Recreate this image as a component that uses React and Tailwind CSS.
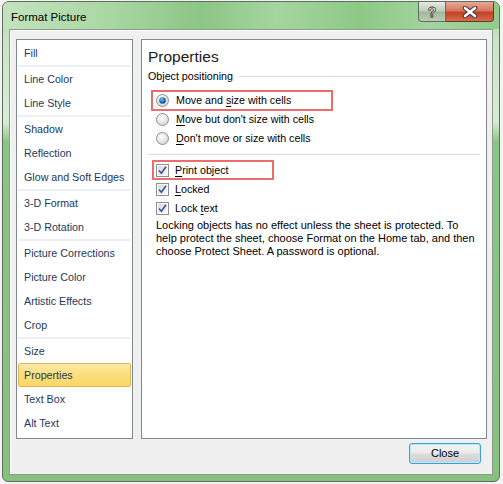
import React from "react";

const leftGroups = [
  ["Fill"],
  ["Line Color", "Line Style"],
  ["Shadow", "Reflection", "Glow and Soft Edges"],
  ["3-D Format", "3-D Rotation"],
  ["Picture Corrections", "Picture Color", "Artistic Effects", "Crop"],
  ["Size", "Properties", "Text Box", "Alt Text"],
];

function Radio({ checked }) {
  return (
    <svg width="13" height="13" viewBox="0 0 13 13" className="shrink-0">
      <defs>
        <radialGradient id="rg" cx="40%" cy="35%" r="70%">
          <stop offset="0" stopColor="#ffffff" />
          <stop offset="1" stopColor="#d4d4d4" />
        </radialGradient>
        <radialGradient id="dot" cx="40%" cy="35%" r="70%">
          <stop offset="0" stopColor="#7ac6f0" />
          <stop offset="0.6" stopColor="#1f6fb0" />
          <stop offset="1" stopColor="#0c3d6e" />
        </radialGradient>
      </defs>
      <circle cx="6.5" cy="6.5" r="6" fill="url(#rg)" stroke="#8e8f8f" />
      {checked && <circle cx="6.5" cy="6.5" r="3.3" fill="url(#dot)" />}
    </svg>
  );
}

function Check() {
  return (
    <svg width="13" height="13" viewBox="0 0 13 13" className="shrink-0">
      <defs>
        <linearGradient id="cg" x1="0" y1="0" x2="1" y2="1">
          <stop offset="0" stopColor="#d9dadc" />
          <stop offset="1" stopColor="#f6f6f6" />
        </linearGradient>
      </defs>
      <rect x="0.5" y="0.5" width="12" height="12" fill="#fff" stroke="#8e8f8f" />
      <rect x="2" y="2" width="9" height="9" fill="url(#cg)" />
      <path d="M3 6.5 L5.4 9.2 L10 2.8" fill="none" stroke="#3b5496" strokeWidth="1.6" />
    </svg>
  );
}

function U({ children }) {
  return <span className="underline underline-offset-[2px]">{children}</span>;
}

export default function App() {
  return (
    <div className="w-[503px] h-[484px] bg-[#f3f3f3] pl-[2px] pt-[1px] font-['Liberation_Sans',Arial,sans-serif] overflow-hidden">
      <div className="w-[498px] h-[481px] flex flex-col rounded-t-[7px] rounded-b-[6px] border border-[#5f6d5f] bg-[linear-gradient(to_bottom,#a9d7a3_0px,#c9e6c5_40px,#d8ecd5_120px,#8ac683_140px,#86c27e_100%)] overflow-hidden">
        {/* title bar */}
        <div className="h-[27px] flex items-start shrink-0 bg-[linear-gradient(to_right,#c3e3be_0%,#a9d6a3_22%,#8cc685_40%,#a6d5a0_55%,#8dc986_72%,#a4d49e_86%,#93cb8c_100%)]">
          <div className="pl-[8px] pt-[8px] text-[11.5px] leading-[14px] text-black">Format Picture</div>
          <div className="ml-auto mr-[5px] flex">
            <div className="w-[28px] h-[20px] rounded-bl-[4px] border border-t-0 border-[#5e6e5e] bg-[linear-gradient(to_bottom,#e3ece1_0%,#bccdb9_48%,#9fb89b_52%,#b8cdb4_100%)] flex items-center justify-center">
              <span className="text-[14px] font-bold leading-none text-white [-webkit-text-stroke:0.8px_#3c3c3c]">?</span>
            </div>
            <div className="w-[48px] h-[20px] rounded-br-[4px] border border-l-0 border-t-0 border-[#5e3a30] bg-[linear-gradient(to_bottom,#e6a996_0%,#d8775f_45%,#c24226_55%,#d66c4c_100%)] flex items-center justify-center">
              <svg width="16" height="12" viewBox="0 0 16 12">
                <path d="M3 2 L13 10 M13 2 L3 10" stroke="#3a3a3a" strokeWidth="4.6" strokeLinecap="round" />
                <path d="M3 2 L13 10 M13 2 L3 10" stroke="#ffffff" strokeWidth="2.6" strokeLinecap="round" />
              </svg>
            </div>
          </div>
        </div>

        {/* client area */}
        <div className="flex-1 mx-[6px] mb-[6px] border border-[#8b9d8a] bg-[#f0f0f0] shadow-[inset_1px_1px_0_#ffffff] flex flex-col pl-[6px] pr-[5px] pt-[9px]">
          <div className="flex gap-[8px] h-[400px]">
            {/* left list */}
            <div className="w-[117px] h-full border border-[#828790] bg-white pt-[1px] text-[10.7px] text-[#1e395b]">
              {leftGroups.map((group, gi) => (
                <div key={gi}>
                  {gi > 0 && <div className="h-[2px] mx-[1px] bg-[#eceff3]" />}
                  {group.map((label) =>
                    label === "Properties" ? (
                      <div
                        key={label}
                        className="h-[24px] mx-[1px] flex items-center pl-[5px] rounded-[2px] border border-[#dfb658] bg-[linear-gradient(to_bottom,#fdeaa6_0%,#fcdd7c_50%,#fbd865_100%)]"
                      >
                        {label}
                      </div>
                    ) : (
                      <div key={label} className="h-[24px] mx-[1px] flex items-center pl-[6px]">
                        {label}
                      </div>
                    )
                  )}
                </div>
              ))}
            </div>

            {/* right panel */}
            <div className="w-[346px] h-full border border-[#828790] bg-white pt-[7px] text-black">
              <div className="pl-[6px] text-[15.5px] leading-[20px] text-[#1b1b1b]">Properties</div>
              <div className="mt-[2px] pl-[6px] pr-[6px] h-[14px] flex items-center gap-[6px] text-[10.7px]">
                <span>Object positioning</span>
                <div className="flex-1 h-[1px] bg-[#d5dfe5]" />
              </div>

              <div className="mt-[8px] text-[10.7px]">
                <div className="relative h-[19px] flex items-center pl-[14px] gap-[7px]">
                  <span className="absolute left-[9px] top-[-1px] w-[182px] h-[21px] border-2 border-[#ec6b6b]" />
                  <Radio checked />
                  <span>
                    Move and <U>s</U>ize with cells
                  </span>
                </div>
                <div className="h-[19px] flex items-center pl-[14px] gap-[7px]">
                  <Radio />
                  <span>
                    <U>M</U>ove but don't size with cells
                  </span>
                </div>
                <div className="h-[19px] flex items-center pl-[14px] gap-[7px]">
                  <Radio />
                  <span>
                    <U>D</U>on't move or size with cells
                  </span>
                </div>
              </div>

              <div className="mt-[6px] mx-[6px] h-[1px] bg-[#d5dfe5]" />

              <div className="mt-[6px] text-[10.7px]">
                <div className="relative h-[19px] flex items-center pl-[14px] gap-[6px]">
                  <span className="absolute left-[10px] top-[-1px] w-[122px] h-[20px] border-2 border-[#ec6b6b]" />
                  <Check />
                  <span>
                    <U>P</U>rint object
                  </span>
                </div>
                <div className="h-[19px] flex items-center pl-[14px] gap-[6px]">
                  <Check />
                  <span>
                    <U>L</U>ocked
                  </span>
                </div>
                <div className="h-[19px] flex items-center pl-[14px] gap-[6px]">
                  <Check />
                  <span>
                    Lock <U>t</U>ext
                  </span>
                </div>
              </div>

              <p className="mt-[1px] pl-[14px] text-[11px] leading-[13px] whitespace-nowrap">
                Locking objects has no effect unless the sheet is protected. To
                <br />
                help protect the sheet, choose Format on the Home tab, and then
                <br />
                choose Protect Sheet. A password is optional.
              </p>
            </div>
          </div>

          <div className="flex justify-end mt-[4px] pr-[6px]">
            <button className="w-[72px] h-[21px] rounded-[3px] border border-[#3c9fdc] shadow-[inset_0_0_0_1px_#bfe6fb] bg-[linear-gradient(to_bottom,#f4f4f4_0%,#ebebeb_48%,#dddddd_52%,#cfcfcf_100%)] text-[11px] text-black flex items-center justify-center">
              Close
            </button>
          </div>
        </div>
      </div>
    </div>
  );
}
